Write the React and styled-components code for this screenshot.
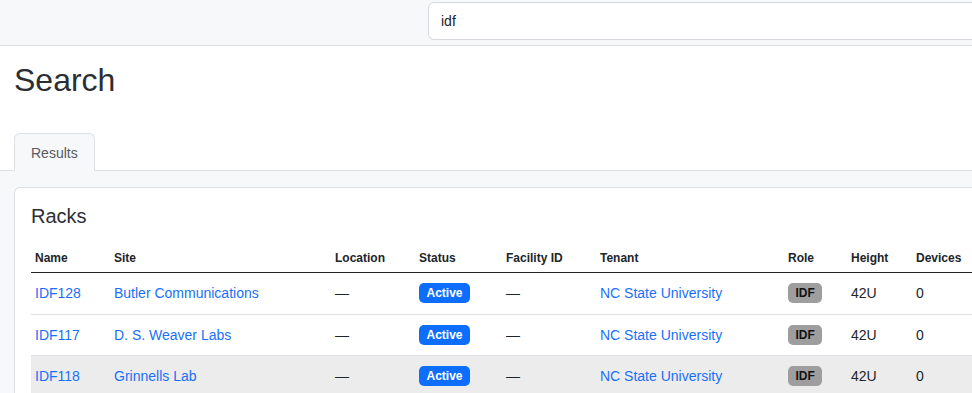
import React from "react";
import styled, { createGlobalStyle } from "styled-components";

const Global = createGlobalStyle`
  html, body { margin: 0; padding: 0; background: #fff; overflow: hidden; }
  body { font-family: "Liberation Sans", Arial, sans-serif; color: #212529; }
  * { box-sizing: border-box; }
`;

const Page = styled.div`
  width: 972px;
  height: 393px;
  overflow: hidden;
  display: flex;
  flex-direction: column;
  & > * { flex-shrink: 0; }
`;

const NavBar = styled.header`
  display: grid;
  grid-template-columns: 428px 620px;
  align-items: start;
  height: 46px;
  padding-top: 2px;
  background: #f7f8f9;
  border-bottom: 1px solid #dde0e4;
`;

const SearchInput = styled.input`
  grid-column: 2;
  height: 38px;
  padding: 0 12px;
  border: 1px solid #d5d9de;
  border-radius: 6px;
  background: #fff;
  font-family: "Liberation Sans", Arial, sans-serif;
  font-size: 14px;
  color: #212529;
  outline: none;
`;

const Title = styled.h1`
  margin: 15px 0 0 14px;
  font-size: 32px;
  font-weight: 400;
  line-height: 38px;
  color: #2b2f33;
`;

const TabNav = styled.nav`
  display: flex;
  margin-top: 34px;
  padding-left: 14px;
  border-bottom: 1px solid #dde0e4;
`;

const Tab = styled.div`
  margin-bottom: -1px;
  padding: 0 16px;
  height: 38px;
  line-height: 38px;
  font-size: 14px;
  color: #555b61;
  background: #f7f8f9;
  border: 1px solid #dde0e4;
  border-bottom-color: #f7f8f9;
  border-radius: 6px 6px 0 0;
`;

const TabContent = styled.section`
  flex: 1 0 auto;
  background: #f7f8f9;
  padding: 16px 0 0 14px;
`;

const Card = styled.div`
  width: 1100px;
  height: 100%;
  background: #fff;
  border: 1px solid #dde0e4;
  border-bottom: none;
  border-radius: 6px 0 0 0;
  padding: 16px 16px 0;
  box-shadow: 0 1px 2px rgba(0, 0, 0, 0.04);
  overflow: hidden;
`;

const CardTitle = styled.h2`
  margin: 0 0 12px;
  font-size: 20px;
  font-weight: 400;
  line-height: 24px;
  color: #2b2f33;
`;

const Table = styled.table`
  border-collapse: collapse;
  table-layout: fixed;
  width: 1000px;
  font-size: 14px;
`;

const Th = styled.th`
  width: ${(p) => p.$w}px;
  text-align: left;
  font-size: 12px;
  font-weight: 700;
  line-height: 16px;
  padding: 10px 4px 6px;
  color: #212529;
  border-bottom: 1px solid #212529;
`;

const Tr = styled.tr`
  background: ${(p) => (p.$hover ? "#ececec" : "transparent")};
`;

const Td = styled.td`
  padding: 10px 4px 9.5px;
  line-height: 21px;
  border-bottom: 1px solid #dee2e6;
  white-space: nowrap;
  color: #212529;
`;

const Link = styled.a`
  color: #1a6ffa;
  text-decoration: none;
`;

const Badge = styled.span`
  display: inline-block;
  padding: 4px 7.5px;
  font-size: 12px;
  font-weight: 700;
  line-height: 12px;
  border-radius: 5px;
  vertical-align: 1px;
  color: ${(p) => (p.$variant === "gray" ? "#111" : "#fff")};
  background: ${(p) => (p.$variant === "gray" ? "#9e9e9e" : "#0d6efd")};
`;

const columns = [
  ["Name", 79],
  ["Site", 221],
  ["Location", 84],
  ["Status", 87],
  ["Facility ID", 94],
  ["Tenant", 188],
  ["Role", 63],
  ["Height", 65],
  ["Devices", 119],
];

const racks = [
  { name: "IDF128", site: "Butler Communications" },
  { name: "IDF117", site: "D. S. Weaver Labs" },
  { name: "IDF118", site: "Grinnells Lab", hover: true },
];

export default function App() {
  return (
    <Page>
      <Global />
      <NavBar>
        <SearchInput defaultValue="idf" />
      </NavBar>
      <Title>Search</Title>
      <TabNav>
        <Tab>Results</Tab>
      </TabNav>
      <TabContent>
        <Card>
          <CardTitle>Racks</CardTitle>
          <Table>
            <thead>
              <tr>
                {columns.map(([label, w]) => (
                  <Th key={label} $w={w}>
                    {label}
                  </Th>
                ))}
              </tr>
            </thead>
            <tbody>
              {racks.map((r) => (
                <Tr key={r.name} $hover={r.hover}>
                  <Td>
                    <Link href="#">{r.name}</Link>
                  </Td>
                  <Td>
                    <Link href="#">{r.site}</Link>
                  </Td>
                  <Td>—</Td>
                  <Td>
                    <Badge>Active</Badge>
                  </Td>
                  <Td>—</Td>
                  <Td>
                    <Link href="#">NC State University</Link>
                  </Td>
                  <Td>
                    <Badge $variant="gray">IDF</Badge>
                  </Td>
                  <Td>42U</Td>
                  <Td>0</Td>
                </Tr>
              ))}
            </tbody>
          </Table>
        </Card>
      </TabContent>
    </Page>
  );
}
